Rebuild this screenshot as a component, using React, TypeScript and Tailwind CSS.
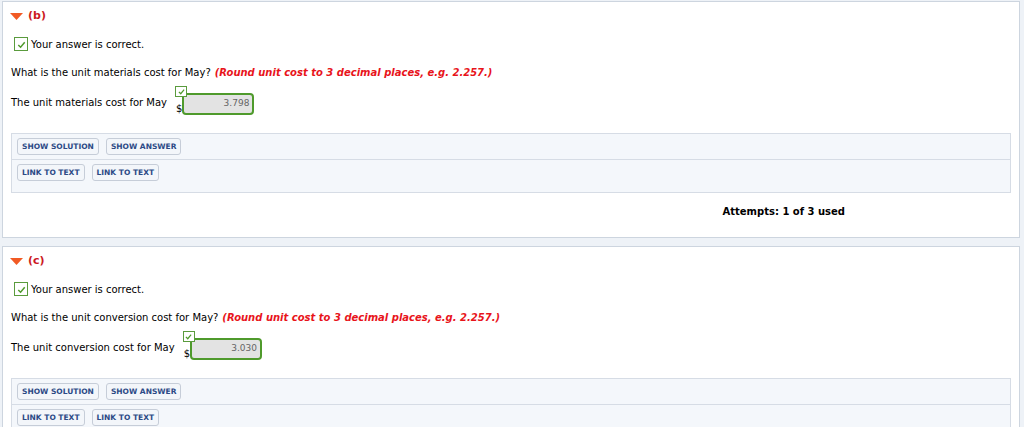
import React from "react";

function CheckMark({ className }: { className?: string }) {
  return (
    <svg viewBox="0 0 12 12" className={className}>
      <polyline points="2.5,6.5 5,9 9.5,3.5" fill="none" stroke="#4f9a2c" strokeWidth="1.6" />
    </svg>
  );
}

function Btn({ children }: { children: React.ReactNode }) {
  return (
    <div className="flex h-[17px] items-center rounded-[3px] border border-[#c6cdd8] bg-[#f3f6fa] px-[4px] text-[7.5px] font-bold text-[#2c4a86]">
      {children}
    </div>
  );
}

type PartProps = {
  letter: string;
  question: string;
  label: string;
  value: string;
  attempts?: boolean;
};

function Part({ letter, question, label, value, attempts }: PartProps) {
  return (
    <div className="ml-[2px] w-[1018px] border border-[#cdd5df] bg-white px-2 pt-[7px] pb-[19px]">
      <div className="-ml-px flex h-[14px] items-center gap-[5px]">
        <svg width="13" height="7" viewBox="0 0 13 7">
          <polygon points="0,0 13,0 6.5,7" fill="#f15a24" />
        </svg>
        <span className="text-[11px] font-bold text-[#cc1b1f]">({letter})</span>
      </div>

      <div className="mt-[14px] ml-[3px] flex h-[14px] items-center gap-[3px]">
        <div className="flex h-[14px] w-[14px] items-center justify-center border border-[#5a9b3d] bg-white">
          <CheckMark className="h-[11px] w-[11px]" />
        </div>
        <span className="text-[10px] text-black">Your answer is correct.</span>
      </div>

      <div className="mt-[14px] flex h-[14px] items-center gap-[4px] text-[10px] text-black">
        <span>{question}</span>
        <span className="font-bold italic text-[#e8141b]">
          (Round unit cost to 3 decimal places, e.g. 2.257.)
        </span>
      </div>

      <div className="mt-[7px] flex h-[29px] items-start">
        <span className="pt-[10px] text-[10px] leading-[14px] text-black">{label}</span>
        <div className="relative ml-[9px] flex items-end pt-[7px]">
          <div className="absolute top-0 -left-px flex h-[11px] w-[12px] items-center justify-center border border-[#5a9b3d] bg-white">
            <CheckMark className="h-[9px] w-[9px]" />
          </div>
          <span className="text-[10px] leading-[12px] text-black">$</span>
          <div className="flex h-[22px] w-[72px] items-center justify-end rounded-[4px] border-2 border-[#4f9a2c] bg-[#e3e3e3] pr-[3px] text-[9px] text-[#666]">
            {value}
          </div>
        </div>
      </div>

      <div className="mt-[18px] border border-[#d6dce5] bg-[#f4f7fb]">
        <div className="flex gap-[7px] border-b border-[#d6dce5] pt-[4px] pb-[4px] pl-[5px]">
          <Btn>SHOW SOLUTION</Btn>
          <Btn>SHOW ANSWER</Btn>
        </div>
        <div className="flex gap-[7px] pt-[4px] pb-[11px] pl-[5px]">
          <Btn>LINK TO TEXT</Btn>
          <Btn>LINK TO TEXT</Btn>
        </div>
      </div>

      {attempts && (
        <div className="mt-[11px] flex h-[14px] items-center justify-end pr-[166px] text-[10px] font-bold text-black">
          Attempts: 1 of 3 used
        </div>
      )}
    </div>
  );
}

export default function App() {
  return (
    <div className="min-h-screen bg-[#eef2f7] pt-px font-['DejaVu_Sans',sans-serif]">
      <Part
        letter="b"
        question="What is the unit materials cost for May?"
        label="The unit materials cost for May"
        value="3.798"
        attempts
      />
      <div className="mt-[8px]">
        <Part
          letter="c"
          question="What is the unit conversion cost for May?"
          label="The unit conversion cost for May"
          value="3.030"
        />
      </div>
    </div>
  );
}
